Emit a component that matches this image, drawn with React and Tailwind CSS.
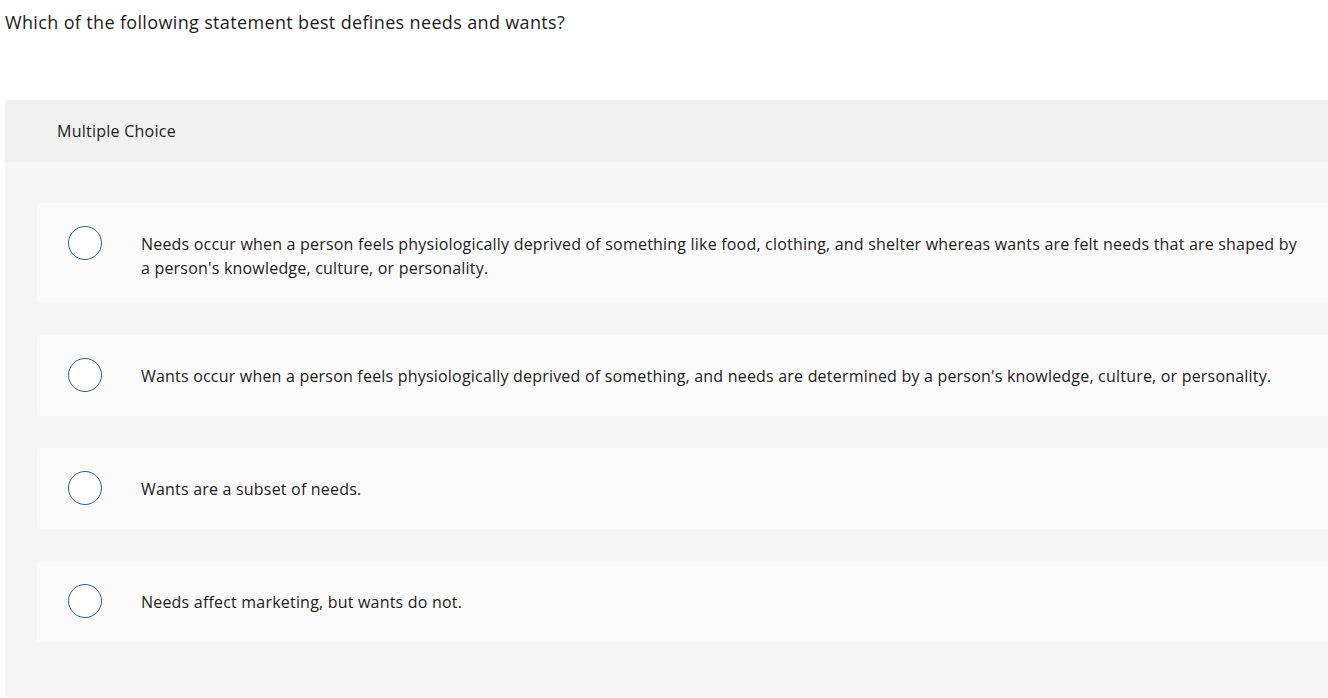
import React from 'react';

const options = [
  "Needs occur when a person feels physiologically deprived of something like food, clothing, and shelter whereas wants are felt needs that are shaped by a person's knowledge, culture, or personality.",
  "Wants occur when a person feels physiologically deprived of something, and needs are determined by a person's knowledge, culture, or personality.",
  'Wants are a subset of needs.',
  'Needs affect marketing, but wants do not.',
];

const App = () => {
  return (
    <div className="min-h-screen bg-white overflow-hidden text-[#1c1c1c]" style={{ fontFamily: '"Open Sans", "Liberation Sans", sans-serif' }}>
      <h1 className="pl-[5px] pt-[10px] h-[100px] text-[18px] leading-[24px] tracking-[0.35px]">
        Which of the following statement best defines needs and wants?
      </h1>

      <div className="ml-[5px] w-[1360px] rounded-tl-[4px] bg-[#f5f5f5]">
        <div className="h-[62px] bg-[#f0f0f0] rounded-tl-[4px] flex items-center pl-[52px] text-[16px] tracking-[0.25px]">
          Multiple Choice
        </div>

        <div className="pl-[32px] pt-[41px] pb-[55px] flex flex-col gap-[32px]">
          {options.map((text, i) => (
            <div key={i} className="flex items-start min-h-[81px] bg-[#fafafa] rounded-[3px]">
              <div className="w-[104px] shrink-0 pl-[31px] pt-[23px]">
                <div className="w-[34px] h-[34px] rounded-full border-[1.5px] border-[#2d5f91] bg-white" />
              </div>
              <p className="w-[1162px] pt-[29px] pb-[23px] text-[16px] leading-[24px] tracking-[0.2px]">{text}</p>
            </div>
          ))}
        </div>
      </div>
    </div>
  );
};

export default App;
